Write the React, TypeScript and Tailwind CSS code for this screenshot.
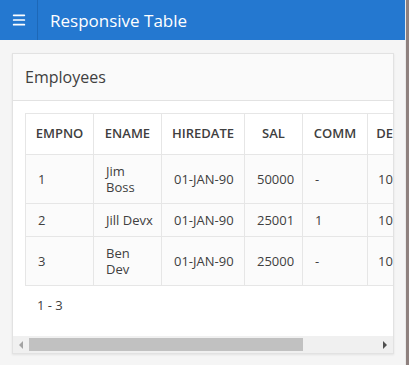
import { Menu } from 'lucide-react';

const rows = [
  { empno: '1', ename: 'Jim Boss', hiredate: '01-JAN-90', sal: '50000', comm: '-', deptno: '10', tall: true },
  { empno: '2', ename: 'Jill Devx', hiredate: '01-JAN-90', sal: '25001', comm: '1', deptno: '10', tall: false },
  { empno: '3', ename: 'Ben Dev', hiredate: '01-JAN-90', sal: '25000', comm: '-', deptno: '10', tall: true },
];

const cols = ['EMPNO', 'ENAME', 'HIREDATE', 'SAL', 'COMM', 'DEPTNO'];

const App = () => {
  return (
    <div className="flex w-[409px] h-[365px] overflow-hidden" style={{ fontFamily: '"Open Sans", "Noto Sans", sans-serif' }}>
      <div className="w-[405px] h-full flex flex-col bg-[#f5f5f5]">
        {/* top bar */}
        <div className="h-[40px] flex items-stretch bg-[#2478d0] text-white">
          <div className="w-[38px] flex items-center justify-center border-r border-[#1d68b8]">
            <Menu size={16} strokeWidth={2.6} />
          </div>
          <div className="pl-[12px] flex items-center text-[17px] leading-none">Responsive Table</div>
        </div>

        <div className="pl-[12px] pr-[12px] pt-[13px]">
          <div className="w-[382px] bg-white border border-[#e2e2e2] shadow-[0_1px_2px_rgba(0,0,0,0.08)]">
            <div className="h-[47px] bg-[#fafafa] border-b border-[#e2e2e2] px-[12px] flex items-center text-[16px] text-[#404040]">
              Employees
            </div>
            <div className="overflow-hidden">
              <div className="pt-[12px] pl-[12px]">
                <table className="table-fixed border-collapse text-[13px] text-[#404040] w-[412px]">
                  <colgroup>
                    <col className="w-[68px]" />
                    <col className="w-[68px]" />
                    <col className="w-[83px]" />
                    <col className="w-[58px]" />
                    <col className="w-[65px]" />
                    <col className="w-[70px]" />
                  </colgroup>
                  <thead>
                    <tr className="h-[41px]">
                      {cols.map((c) => (
                        <th key={c} className="border border-[#e6e6e6] bg-white font-semibold text-center px-[8px] whitespace-nowrap overflow-hidden">
                          {c}
                        </th>
                      ))}
                    </tr>
                  </thead>
                  <tbody>
                    {rows.map((r) => (
                      <tr key={r.empno} className={r.tall ? 'h-[49px]' : 'h-[33px]'}>
                        <td className="border border-[#e6e6e6] bg-[#fbfbfb] px-[12px] leading-[16px]">{r.empno}</td>
                        <td className={`border border-[#e6e6e6] bg-[#fbfbfb] pl-[12px] pr-[6px] leading-[16px] ${r.tall ? '' : 'whitespace-nowrap'}`}>
                          <div className={r.tall ? 'w-[40px]' : ''}>{r.ename}</div>
                        </td>
                        <td className="border border-[#e6e6e6] bg-[#fbfbfb] px-[12px] leading-[16px] whitespace-nowrap">{r.hiredate}</td>
                        <td className="border border-[#e6e6e6] bg-[#fbfbfb] px-[12px] leading-[16px]">{r.sal}</td>
                        <td className="border border-[#e6e6e6] bg-[#fbfbfb] px-[12px] leading-[16px]">{r.comm}</td>
                        <td className="border border-[#e6e6e6] bg-[#fbfbfb] px-[10px] leading-[16px]">{r.deptno}</td>
                      </tr>
                    ))}
                  </tbody>
                </table>
              </div>
              <div className="h-[50px] pl-[24px] pt-[11px] text-[13px] leading-[16px] text-[#404040]">1 - 3</div>
            </div>
            {/* horizontal scrollbar */}
            <div className="h-[17px] bg-[#f0f0f0] flex items-center">
              <div className="w-[16px] h-full flex items-center justify-center">
                <div className="w-0 h-0 border-y-[4px] border-y-transparent border-r-[4px] border-r-[#a3a3a3]" />
              </div>
              <div className="w-[274px] h-[13px] bg-[#c1c1c1]" />
              <div className="flex-1" />
              <div className="w-[16px] h-full flex items-center justify-center">
                <div className="w-0 h-0 border-y-[4px] border-y-transparent border-l-[4px] border-l-[#505050]" />
              </div>
            </div>
          </div>
        </div>
      </div>
      <div className="w-[1px] h-full bg-[#e9e9e9]" />
      <div className="w-[3px] h-full bg-[#8e807e]" />
    </div>
  );
};

export default App;
